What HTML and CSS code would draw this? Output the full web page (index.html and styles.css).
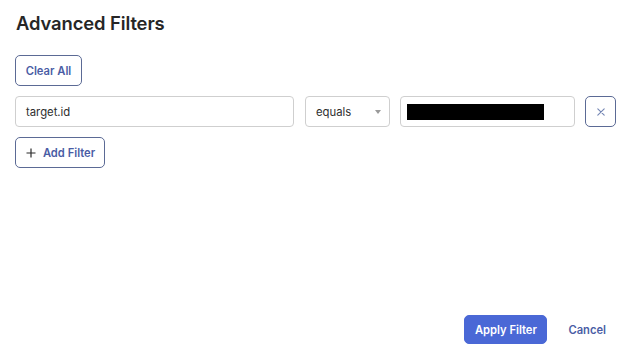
FILE: index.html
```html
<!DOCTYPE html>
<html lang="en">
<head>
<meta charset="utf-8">
<title>Advanced Filters</title>
<link rel="stylesheet" href="styles.css">
</head>
<body>
<div class="dialog">
  <h1 class="title">Advanced Filters</h1>
  <div class="body">
    <button class="btn btn-outline clear">Clear All</button>
    <div class="filter-row">
      <div class="field field-name">target.id</div>
      <div class="field field-op">
        <span>equals</span>
        <span class="caret"></span>
      </div>
      <div class="field field-value"><span class="redacted"></span></div>
      <button class="btn btn-outline btn-icon" aria-label="Remove filter">
        <svg width="8" height="8" viewBox="0 0 8 8"><path d="M0.8 0.8L7.2 7.2M7.2 0.8L0.8 7.2" stroke="#7385b3" stroke-width="1.1" stroke-linecap="round"/></svg>
      </button>
    </div>
    <button class="btn btn-outline add">
      <svg class="plus" width="10" height="10" viewBox="0 0 10 10"><path d="M5 0.5V9.5M0.5 5H9.5" stroke="#2b2b2b" stroke-width="1.2"/></svg>
      <span>Add Filter</span>
    </button>
  </div>
  <div class="footer">
    <button class="btn btn-primary">Apply Filter</button>
    <button class="btn btn-link">Cancel</button>
  </div>
</div>
</body>
</html>
```
FILE: styles.css
```css
* { box-sizing: border-box; }
html, body { margin: 0; padding: 0; background: #fff; }
body {
  font-family: Inter, "Noto Sans", "Liberation Sans", sans-serif;
  color: #2a2a2a;
}
.dialog {
  height: 354px;
  padding: 0 15px 10px 15px;
  display: flex;
  flex-direction: column;
}
.title {
  margin: 12px 0 0 1px;
  font-size: 18.4px;
  line-height: 22px;
  font-weight: 600;
  color: #262626;
  letter-spacing: -0.1px;
}
.body {
  margin-top: 21px;
  display: flex;
  flex-direction: column;
  align-items: flex-start;
  gap: 10px;
}
.btn {
  font-family: inherit;
  font-size: 11.2px;
  font-weight: 600;
  border-radius: 5px;
  cursor: pointer;
  display: inline-flex;
  align-items: center;
  justify-content: center;
}
.btn-outline {
  background: #fff;
  border: 1px solid #5b6a95;
  color: #4a5da5;
  height: 31px;
}
.clear { width: 67px; padding: 0; }
.add { width: 90px; padding: 0 0 0 1px; gap: 7px; }
.plus { display: block; }
.filter-row {
  display: flex;
  align-self: stretch;
  gap: 10px;
  align-items: center;
}
.field {
  height: 31px;
  border: 1px solid #cfcfcf;
  border-radius: 4px;
  font-size: 11.3px;
  color: #2e2e2e;
  display: flex;
  align-items: center;
  padding: 0 10px;
}
.field-name { width: 279px; margin-right: 1px; }
.field-op { width: 85px; justify-content: space-between; padding-right: 8px; }
.caret {
  width: 0; height: 0;
  border-left: 3px solid transparent;
  border-right: 3px solid transparent;
  border-top: 4px solid #9a9a9a;
}
.field-value { width: 175px; padding: 0 6px; }
.redacted {
  display: block;
  width: 137px;
  height: 16px;
  background: #000;
}
.btn-icon { width: 31px; padding: 0; }
.footer {
  margin-top: auto;
  display: flex;
  justify-content: flex-end;
  gap: 11px;
}
.btn-primary {
  background: #4a68d6;
  border: 1px solid #4a68d6;
  color: #fff;
  height: 29px;
  width: 83px;
  padding: 0;
}
.btn-link {
  background: none;
  border: none;
  color: #4a5da5;
  height: 29px;
  padding: 0 10px;
}
```
